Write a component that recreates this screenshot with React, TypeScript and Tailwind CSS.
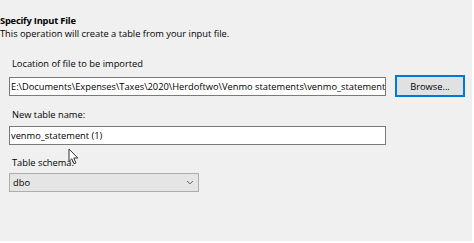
import React from "react";

function Cursor() {
  return (
    <svg className="absolute left-[68px] top-[148px]" width="11" height="17" viewBox="0 0 11 17">
      <path d="M1 1 L1 13.5 L3.8 10.8 L6 15.8 L7.9 15 L5.8 10 L9.8 10 Z" fill="#fff" stroke="#333" strokeWidth="1" strokeLinejoin="round" />
    </svg>
  );
}

export default function App() {
  return (
    <div className="relative w-[474px] h-[243px] bg-[#f0f0f0] font-['Open_Sans','Liberation_Sans',sans-serif] text-[9.3px] text-black overflow-hidden">
      <div className="absolute right-0 top-0 bottom-0 w-[2px] bg-white" />
      <div className="absolute left-0 right-0 bottom-0 h-[2px] bg-white" />
      <div className="pt-[14px]">
        <div className="font-bold leading-[13px] tracking-[-0.2px]">Specify Input File</div>
        <div className="leading-[13px]">This operation will create a table from your input file.</div>
      </div>
      <div className="pl-[9px] pt-[17px] flex flex-col">
        <div className="pl-[3px] leading-[13px]">Location of file to be imported</div>
        <div className="flex items-center gap-[9px] mt-[5px]">
          <div className="w-[377px] h-[19px] bg-white border border-[#7a7a7a] pl-[1px] leading-[17px] whitespace-nowrap overflow-hidden">
            E:\Documents\Expenses\Taxes\2020\Herdoftwo\Venmo statements\venmo_statement
          </div>
          <div className="w-[70px] h-[22px] bg-[#e1e1e1] border-2 border-[#0078d7] flex items-center justify-center leading-[13px]">
            Browse...
          </div>
        </div>
        <div className="pl-[3px] leading-[13px] mt-[11px]">New table name:</div>
        <div className="w-[377px] h-[19px] mt-[5px] bg-white border border-[#7a7a7a] pl-[1px] leading-[17px]">
          venmo_statement (1)
        </div>
        <div className="pl-[3px] leading-[13px] mt-[11px]">Table schema:</div>
        <div className="w-[190px] h-[19px] mt-[4px] bg-[#e5e5e5] border border-[#adadad] px-[3px] flex items-center justify-between">
          <span className="leading-[13px]">dbo</span>
          <svg width="8" height="5" viewBox="0 0 8 5" className="mr-[1px]">
            <path d="M1 1 L4 3.8 L7 1" fill="none" stroke="#666" strokeWidth="1" />
          </svg>
        </div>
      </div>
      <Cursor />
    </div>
  );
}
